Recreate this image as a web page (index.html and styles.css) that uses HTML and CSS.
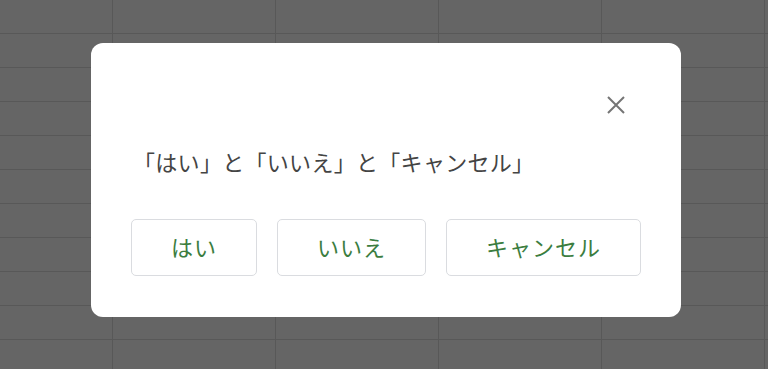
FILE: index.html
```html
<!DOCTYPE html>
<html lang="ja">
<head>
    <meta charset="UTF-8">
    <meta name="viewport" content="width=device-width, initial-scale=1.0">
    <title>確認</title>
    <link rel="stylesheet" href="styles.css">
</head>
<body>
    <div class="sheet"></div>

    <div class="overlay">
        <div class="dialog">
            <div class="dialog-header">
                <button class="close-btn" aria-label="閉じる">
                    <svg width="18" height="18" viewBox="0 0 18 18">
                        <path d="M1 1L17 17M17 1L1 17" stroke="#757575" stroke-width="2" fill="none"/>
                    </svg>
                </button>
            </div>
            <p class="message">「はい」と「いいえ」と「キャンセル」</p>
            <div class="actions">
                <button class="choice-btn">はい</button>
                <button class="choice-btn">いいえ</button>
                <button class="choice-btn">キャンセル</button>
            </div>
        </div>
    </div>
</body>
</html>
```

FILE: styles.css
```css
body {
    margin: 0;
    padding: 0;
    font-family: "Noto Sans CJK JP", "Noto Sans", sans-serif;
    overflow: hidden;
}
.sheet {
    width: 768px;
    height: 369px;
    background-color: #656565;
    background-image:
        linear-gradient(to right, #585858 1px, transparent 1px),
        linear-gradient(to bottom, #585858 1px, transparent 1px);
    background-size: 163px 34px;
    background-position: 112px 33px;
}
.overlay {
    position: fixed;
    top: 0;
    left: 0;
    right: 0;
    bottom: 0;
    display: flex;
    justify-content: center;
    align-items: flex-start;
    padding: 43px 0 0 4px;
}
.dialog {
    width: 590px;
    box-sizing: border-box;
    background-color: #fff;
    border-radius: 12px;
    padding: 38px 41px 41px 40px;
}
.dialog-header {
    display: flex;
    justify-content: flex-end;
    height: 48px;
}
.close-btn {
    width: 48px;
    height: 48px;
    border: none;
    background: none;
    padding: 0;
    display: flex;
    align-items: center;
    justify-content: center;
    cursor: pointer;
}
.message {
    margin: 17px 0 0 2px;
    font-size: 22px;
    line-height: 30px;
    letter-spacing: 0.3px;
    color: #444;
}
.actions {
    display: flex;
    gap: 20px;
    margin-top: 43px;
}
.choice-btn {
    flex-shrink: 0;
    white-space: nowrap;
    height: 57px;
    padding: 0 39px 3px 39px;
    font-family: inherit;
    font-size: 22px;
    letter-spacing: 1px;
    color: #3b7d40;
    background-color: #fff;
    border: 1px solid #dadce0;
    border-radius: 5px;
    cursor: pointer;
}
```
